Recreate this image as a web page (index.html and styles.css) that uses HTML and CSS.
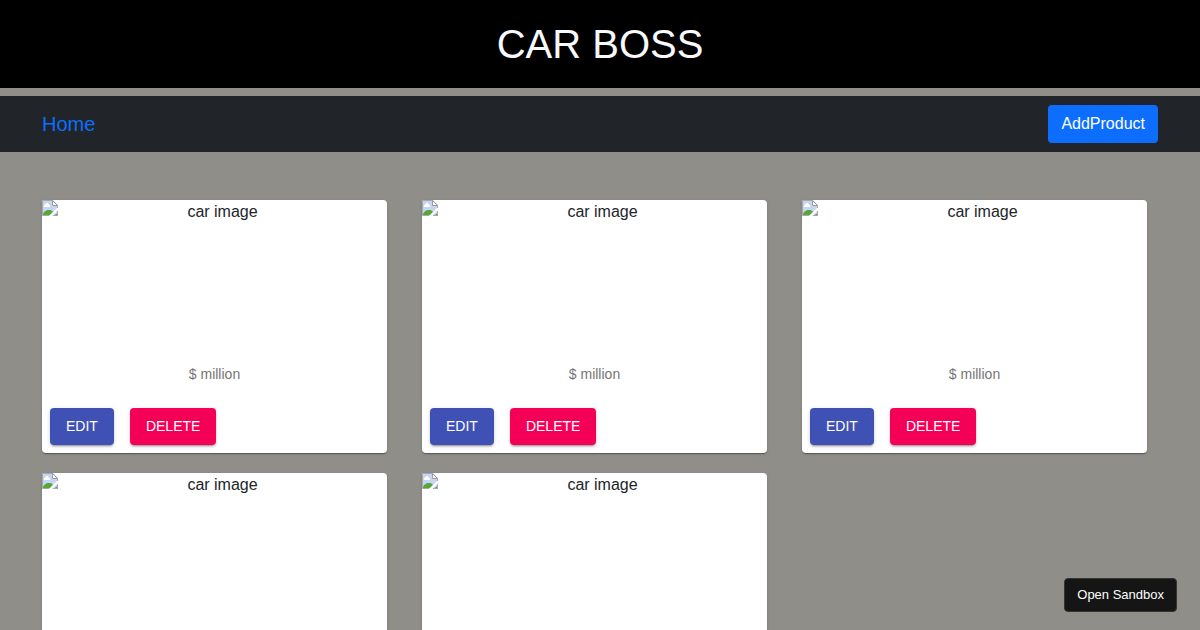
FILE: index.html
```html
<!DOCTYPE html>
<html lang="en">
<head>
  <meta charset="UTF-8" />
  <meta name="viewport" content="width=device-width, initial-scale=1.0" />
  <title>Car Boss</title>
  <link rel="stylesheet" href="styles.css">
</head>
<body>
  <svg width="0" height="0" class="sprite" aria-hidden="true">
    <symbol id="broken" viewBox="0 0 16 16">
      <path d="M0 0h11l5 5v3L8 16H0z" fill="#c6d5f6"/>
      <path d="M2 7V5h1V4h1V3h2v1h1v1h1v2z" fill="#fff"/>
      <path d="M1 15c0-3 3-5 6-5 2 0 3 .5 4 2l-3 3z" fill="#57a832"/>
      <path d="M16 10v6h-6z" fill="#c6d5f6"/>
      <path d="M16 13v3h-5z" fill="#57a832"/>
      <path d="M16 7v3l-6 6H7z" fill="#fff"/>
      <path d="M.5 15.500V.5h10.500M.5 15.500H7M15.500 5v3M15.500 11v4.500H11" fill="none" stroke="#a9a9a9"/>
      <path d="M10.500.5v5h5z" fill="#fff" stroke="#9b9b9b"/>
    </symbol>
  </svg>

  <header>
    <h1>CAR BOSS</h1>
  </header>
  <nav class="navbar">
    <div class="container">
      <a class="brand" href="#">Home</a>
      <button class="btn-add" type="button">AddProduct</button>
    </div>
  </nav>

  <main class="container">
    <div class="cars">
      <div class="card">
        <div class="card-media"><svg><use href="#broken"/></svg><span>car image</span></div>
        <p class="price">$ million</p>
        <div class="card-actions">
          <button class="edit" type="button">EDIT</button>
          <button class="delete" type="button">DELETE</button>
        </div>
      </div>
      <div class="card">
        <div class="card-media"><svg><use href="#broken"/></svg><span>car image</span></div>
        <p class="price">$ million</p>
        <div class="card-actions">
          <button class="edit" type="button">EDIT</button>
          <button class="delete" type="button">DELETE</button>
        </div>
      </div>
      <div class="card">
        <div class="card-media"><svg><use href="#broken"/></svg><span>car image</span></div>
        <p class="price">$ million</p>
        <div class="card-actions">
          <button class="edit" type="button">EDIT</button>
          <button class="delete" type="button">DELETE</button>
        </div>
      </div>
      <div class="card">
        <div class="card-media"><svg><use href="#broken"/></svg><span>car image</span></div>
        <p class="price">$ million</p>
        <div class="card-actions">
          <button class="edit" type="button">EDIT</button>
          <button class="delete" type="button">DELETE</button>
        </div>
      </div>
      <div class="card">
        <div class="card-media"><svg><use href="#broken"/></svg><span>car image</span></div>
        <p class="price">$ million</p>
        <div class="card-actions">
          <button class="edit" type="button">EDIT</button>
          <button class="delete" type="button">DELETE</button>
        </div>
      </div>
    </div>
  </main>

  <button class="sandbox" type="button">Open Sandbox</button>
</body>
</html>
```
FILE: styles.css
```css
* { box-sizing: border-box; }
body {
  margin: 0;
  font-family: Helvetica, "Liberation Sans", Arial, sans-serif;
  font-size: 16px; line-height: 24px;
  background: #8f8e88; color: #212529;
}
button { font-family: inherit; border: none; cursor: pointer; }
.sprite { position: absolute; }
.container { width: 100%; max-width: 1140px; margin: 0 auto; padding: 0 12px; }

header { background: #000; color: #f8f9fa; padding: 20px; margin-bottom: 8px; text-align: center; }
h1 { margin: 0; font-size: 40px; font-weight: 400; line-height: 48px; }

.navbar { background: #212529; padding: 8px 0; }
.navbar .container { display: flex; justify-content: space-between; align-items: center; min-height: 40px; }
.brand { color: #0d6efd; font-size: 20px; line-height: 30px; text-decoration: none; }
.btn-add {
  background: #0d6efd; color: #fff; border-radius: 4px;
  padding: 7px 13px; font-size: 16px; line-height: 24px;
}

.cars {
  display: grid; grid-template-columns: repeat(auto-fill, minmax(345px, 1fr));
  row-gap: 20px; margin: 48px -24px 20px 0;
}
.card {
  width: 345px; background: #fff; border-radius: 4px; text-align: center;
  box-shadow: 0 2px 1px -1px rgba(0,0,0,0.2), 0 1px 1px rgba(0,0,0,0.14), 0 1px 3px rgba(0,0,0,0.12);
}
.card-media { display: flex; height: 140px; }
.card-media svg { width: 16px; height: 16px; }
.card-media span { flex: 1; }
.price { margin: 0; padding: 24px 16px 16px; color: #757575; font-size: 14px; line-height: 20px; }
.card-actions { display: flex; gap: 16px; padding: 8px; }
.card-actions button {
  padding: 6px 16px; border-radius: 4px; color: #fff;
  font-size: 14px; line-height: 25px;
  box-shadow: 0 3px 1px -2px rgba(0,0,0,0.2), 0 2px 2px rgba(0,0,0,0.14), 0 1px 5px rgba(0,0,0,0.12);
}
.card-actions .edit { background: #3f51b5; }
.card-actions .delete { background: #f50057; }

.sandbox {
  position: fixed; right: 23px; bottom: 18px;
  padding: 8px 12px; border: 1px solid #343434; border-radius: 4px;
  background: #151515; color: #fff; font-size: 13px; line-height: 16px;
}
```
